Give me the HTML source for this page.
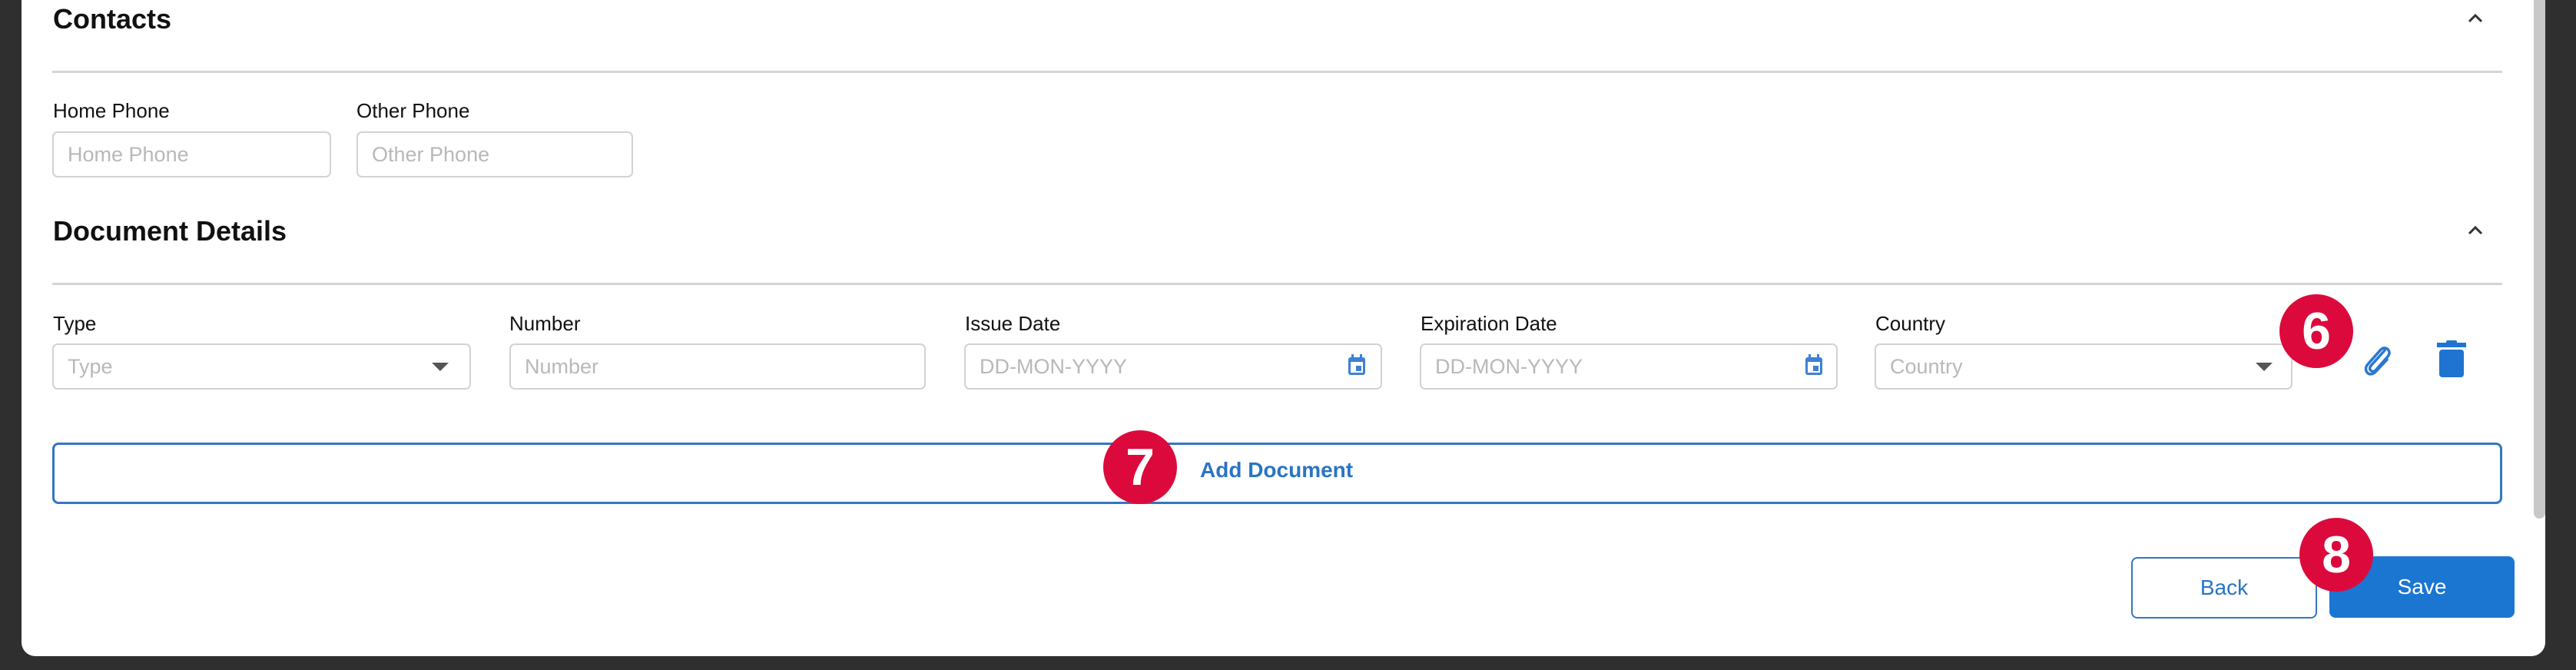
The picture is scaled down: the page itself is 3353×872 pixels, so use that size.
<!DOCTYPE html>
<html><head><meta charset="utf-8">
<style>
*{margin:0;padding:0;box-sizing:border-box}
body{width:3353px;height:872px;background:#2f2f2f;position:relative;overflow:hidden;font-family:"Liberation Sans",sans-serif}
.panel{position:absolute;left:28px;top:-20px;width:3285px;height:874px;background:#fff;border-radius:0 0 18px 18px}
.a{position:absolute}
.h{font-weight:bold;font-size:36px;color:#111;left:69px}
.hr{position:absolute;left:68px;width:3189px;height:3px;background:#d4d4d4}
.lbl{position:absolute;font-size:26px;color:#111}
.in{position:absolute;border:2px solid #d2d2d2;border-radius:7px;height:60px;font-size:27px;color:#b8b8b8;padding-left:18px;line-height:56px}
.badge{position:absolute;width:96px;height:96px;border-radius:50%;background:#dc0a3c;color:#fff;font-size:68px;text-align:center;line-height:96px;font-weight:bold}
.arr{position:absolute;width:0;height:0;border-left:11px solid transparent;border-right:11px solid transparent;border-top:11px solid #555}
.cal{position:absolute;width:22px;height:28px}
</style></head><body>
<div class="panel"></div>
<div class="a" style="left:3298px;top:0;width:15px;height:675px;background:#c8c8c8;border-radius:0 0 8px 8px"></div>

<div class="a h" style="top:4px">Contacts</div>
<svg class="a" style="left:3210px;top:16px" width="24" height="16" viewBox="0 0 24 16"><path d="M4 12 L12 4 L20 12" stroke="#333" stroke-width="3" fill="none"/></svg>
<div class="hr" style="top:92px"></div>
<div class="lbl" style="left:69px;top:129px">Home Phone</div>
<div class="lbl" style="left:464px;top:129px">Other Phone</div>
<div class="in" style="left:68px;top:171px;width:363px">Home Phone</div>
<div class="in" style="left:464px;top:171px;width:360px">Other Phone</div>

<div class="a h" style="top:280px">Document Details</div>
<svg class="a" style="left:3210px;top:292px" width="24" height="16" viewBox="0 0 24 16"><path d="M4 12 L12 4 L20 12" stroke="#333" stroke-width="3" fill="none"/></svg>
<div class="hr" style="top:368px"></div>

<div class="lbl" style="left:69px;top:406px">Type</div>
<div class="lbl" style="left:663px;top:406px">Number</div>
<div class="lbl" style="left:1256px;top:406px">Issue Date</div>
<div class="lbl" style="left:1849px;top:406px">Expiration Date</div>
<div class="lbl" style="left:2441px;top:406px">Country</div>

<div class="in" style="left:68px;top:447px;width:545px">Type</div>
<div class="arr" style="left:562px;top:472px"></div>
<div class="in" style="left:663px;top:447px;width:542px">Number</div>
<div class="in" style="left:1255px;top:447px;width:544px">DD-MON-YYYY</div>
<svg class="cal" style="left:1755px;top:460px" viewBox="0 0 22 28"><rect x="0" y="5" width="22" height="23" rx="3" fill="#3c82d2"/><rect x="3" y="11" width="16" height="14" fill="#fff"/><rect x="10" y="16" width="7" height="7" fill="#3c82d2"/><rect x="4" y="1" width="3" height="6" fill="#3c82d2"/><rect x="15" y="1" width="3" height="6" fill="#3c82d2"/></svg>
<div class="in" style="left:1848px;top:447px;width:544px">DD-MON-YYYY</div>
<svg class="cal" style="left:2350px;top:460px" viewBox="0 0 22 28"><rect x="0" y="5" width="22" height="23" rx="3" fill="#3c82d2"/><rect x="3" y="11" width="16" height="14" fill="#fff"/><rect x="10" y="16" width="7" height="7" fill="#3c82d2"/><rect x="4" y="1" width="3" height="6" fill="#3c82d2"/><rect x="15" y="1" width="3" height="6" fill="#3c82d2"/></svg>
<div class="in" style="left:2440px;top:447px;width:544px">Country</div>
<div class="arr" style="left:2936px;top:472px"></div>

<div class="badge" style="left:2967px;top:383px">6</div>
<svg class="a" style="left:3074px;top:446px" width="42" height="46" viewBox="0 0 42 46"><path d="M30 10 L12 30 C8 35 14 40 18 36 L34 18 C40 11 31 3 25 9 L8 28 C1 36 10 46 18 38 L33 22" stroke="#2a78d0" stroke-width="3.5" fill="none" stroke-linecap="round"/></svg>
<svg class="a" style="left:3172px;top:443px" width="38" height="48" viewBox="0 0 38 48"><rect x="12" y="0" width="14" height="5" rx="2" fill="#1e74d0"/><rect x="0" y="3" width="38" height="6" fill="#1e74d0"/><rect x="3" y="12" width="32" height="36" rx="4" fill="#1e74d0"/></svg>

<div class="a" style="left:68px;top:576px;width:3189px;height:80px;border:3px solid #3576be;border-radius:8px"></div>
<div class="a" style="left:1562px;top:596px;font-size:28px;color:#2a74c4;font-weight:600">Add Document</div>
<div class="badge" style="left:1436px;top:560px">7</div>

<div class="a" style="left:2774px;top:725px;width:242px;height:80px;border:2px solid #3576be;border-radius:8px;color:#2a74c4;font-size:28px;text-align:center;line-height:76px">Back</div>
<div class="a" style="left:3032px;top:724px;width:241px;height:80px;background:#1b76d2;border-radius:8px;color:#fff;font-size:28px;text-align:center;line-height:80px">Save</div>
<div class="badge" style="left:2993px;top:674px">8</div>
</body></html>
